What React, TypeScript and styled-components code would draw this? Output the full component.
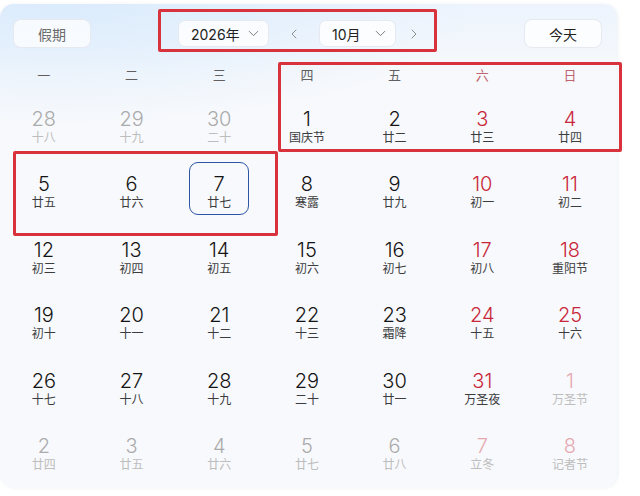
import React from "react";
import styled, { createGlobalStyle } from "styled-components";
import { ChevronDown, ChevronLeft, ChevronRight } from "lucide-react";

const GlobalStyle = createGlobalStyle`
  html, body {
    margin: 0;
    padding: 0;
    background: #ffffff;
  }
  body {
    font-family: Inter, "Noto Sans CJK SC", sans-serif;
  }
`;

const Page = styled.div`
  position: relative;
  width: 640px;
  height: 496px;
  overflow: hidden;
`;

const Panel = styled.div`
  margin-top: 4px;
  width: 617px;
  height: 484px;
  box-sizing: border-box;
  padding-top: 15px;
  border-radius: 14px;
  background:
    radial-gradient(ellipse 420px 120px at 60px 0px, rgba(218, 235, 252, 0.95), rgba(218, 235, 252, 0) 100%),
    linear-gradient(180deg, #edf4fd 0px, #f7f9fc 70px, #f8f9fc 100%);
  box-shadow: 1px 0 3px rgba(180, 190, 205, 0.25);
`;

const Toolbar = styled.div`
  display: flex;
  align-items: center;
  height: 29px;
  padding: 0 15px 0 13px;
`;

const PlainButton = styled.button<{ $muted?: boolean }>`
  width: 78px;
  height: 29px;
  border: 1px solid #e6eaf0;
  border-radius: 8px;
  background: rgba(255, 255, 255, 0.75);
  color: ${(p) => (p.$muted ? "#6a6a6a" : "#222")};
  font-family: inherit;
  font-size: 14px;
  padding: 0;
  margin-left: ${(p) => (p.$muted ? "0" : "auto")};
`;

const Switcher = styled.div`
  display: flex;
  align-items: center;
  margin-left: 87px;
`;

const Select = styled.div<{ $w: number }>`
  display: flex;
  align-items: center;
  justify-content: space-between;
  box-sizing: border-box;
  width: ${(p) => p.$w}px;
  height: 27px;
  padding: 0 6px 0 12px;
  border: 1px solid #e6eaf0;
  border-radius: 7px;
  background: rgba(255, 255, 255, 0.8);
  font-size: 14px;
  color: #222;
  svg {
    color: #707070;
  }
`;

const Arrow = styled.span<{ $w: number }>`
  display: flex;
  align-items: center;
  justify-content: center;
  width: ${(p) => p.$w}px;
  color: #808080;
`;

const WeekRow = styled.div`
  display: grid;
  grid-template-columns: repeat(7, 87.7px);
  margin-top: 12px;
  height: 30px;
`;

const WeekLabel = styled.div<{ $weekend: boolean }>`
  text-align: center;
  line-height: 30px;
  font-size: 13px;
  color: ${(p) => (p.$weekend ? "#c0646d" : "#606060")};
`;

const Grid = styled.div`
  display: grid;
  grid-template-columns: repeat(7, 87.7px);
  grid-auto-rows: 65.4px;
  margin-top: 4px;
`;

const Cell = styled.div`
  display: flex;
  justify-content: center;
  align-items: flex-start;
  padding-top: 3px;
`;

const Day = styled.div<{ $selected: boolean }>`
  display: flex;
  flex-direction: column;
  align-items: center;
  box-sizing: border-box;
  width: 60px;
  height: 53px;
  padding-top: 10px;
  border-radius: 9px;
  border: 1.5px solid ${(p) => (p.$selected ? "#2e55a6" : "transparent")};
`;

type Tone = "normal" | "red" | "gray" | "pink";

const numColor: Record<Tone, string> = {
  normal: "#141414",
  red: "#c82639",
  gray: "#ababab",
  pink: "#e6a8b0",
};

const lunarColor: Record<Tone, string> = {
  normal: "#3c3c3c",
  red: "#3c3c3c",
  gray: "#bdbdbd",
  pink: "#bdbdbd",
};

const Num = styled.div<{ $tone: Tone }>`
  font-size: 20px;
  line-height: 22px;
  font-weight: 350;
  color: ${(p) => numColor[p.$tone]};
`;

const Lunar = styled.div<{ $tone: Tone }>`
  font-size: 12px;
  line-height: 16px;
  color: ${(p) => lunarColor[p.$tone]};
`;

const Mark = styled.div<{ $x: number; $y: number; $w: number; $h: number }>`
  position: absolute;
  left: ${(p) => p.$x}px;
  top: ${(p) => p.$y}px;
  width: ${(p) => p.$w}px;
  height: ${(p) => p.$h}px;
  box-sizing: border-box;
  border: 3px solid #d8333d;
  border-radius: 2px;
  pointer-events: none;
`;

const weekdays = ["一", "二", "三", "四", "五", "六", "日"];

const prev = [
  [28, "十八"],
  [29, "十九"],
  [30, "二十"],
] as const;

const october = [
  "国庆节", "廿二", "廿三", "廿四", "廿五", "廿六", "廿七", "寒露", "廿九", "初一",
  "初二", "初三", "初四", "初五", "初六", "初七", "初八", "重阳节", "初十", "十一",
  "十二", "十三", "霜降", "十五", "十六", "十七", "十八", "十九", "二十", "廿一",
  "万圣夜",
];

const next = ["万圣节", "廿四", "廿五", "廿六", "廿七", "廿八", "立冬", "记者节"];

type DayData = { n: number; lunar: string; current: boolean };

const days: DayData[] = [
  ...prev.map(([n, lunar]) => ({ n, lunar, current: false })),
  ...october.map((lunar, i) => ({ n: i + 1, lunar, current: true })),
  ...next.map((lunar, i) => ({ n: i + 1, lunar, current: false })),
];

export default function App() {
  return (
    <Page>
      <GlobalStyle />
      <Panel>
        <Toolbar>
          <PlainButton $muted>假期</PlainButton>
          <Switcher>
            <Select $w={91}>
              2026年
              <ChevronDown size={17} strokeWidth={1.3} />
            </Select>
            <Arrow $w={50}>
              <ChevronLeft size={16} strokeWidth={1.3} />
            </Arrow>
            <Select $w={77}>
              10月
              <ChevronDown size={17} strokeWidth={1.3} />
            </Select>
            <Arrow $w={36}>
              <ChevronRight size={16} strokeWidth={1.3} />
            </Arrow>
          </Switcher>
          <PlainButton>今天</PlainButton>
        </Toolbar>
        <WeekRow>
          {weekdays.map((w, i) => (
            <WeekLabel key={w} $weekend={i >= 5}>
              {w}
            </WeekLabel>
          ))}
        </WeekRow>
        <Grid>
          {days.map((d, i) => {
            const weekend = i % 7 >= 5;
            const tone: Tone = d.current
              ? weekend
                ? "red"
                : "normal"
              : weekend
              ? "pink"
              : "gray";
            return (
              <Cell key={i}>
                <Day $selected={d.current && d.n === 7}>
                  <Num $tone={tone}>{d.n}</Num>
                  <Lunar $tone={tone}>{d.lunar}</Lunar>
                </Day>
              </Cell>
            );
          })}
        </Grid>
      </Panel>
      <Mark $x={158} $y={9} $w={279} $h={43} />
      <Mark $x={278} $y={62} $w={344} $h={90} />
      <Mark $x={13} $y={151} $w={265} $h={85} />
    </Page>
  );
}
